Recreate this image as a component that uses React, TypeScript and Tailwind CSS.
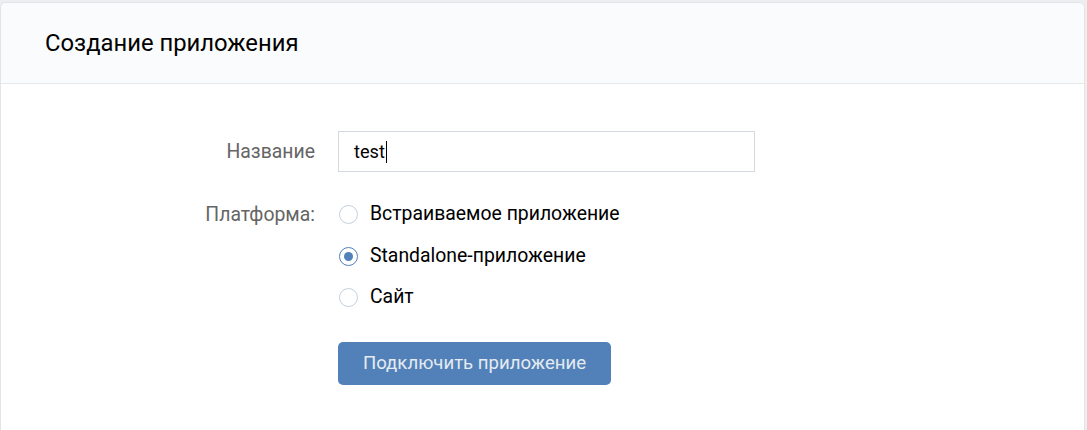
import { useState } from 'react';

const platforms = ['Встраиваемое приложение', 'Standalone-приложение', 'Сайт'];

export default function App() {
  const [platform, setPlatform] = useState(1);

  return (
    <div className="min-h-[430px] bg-[#edeef0] pt-[3px] pl-px pr-[3px] font-['Roboto','Liberation_Sans',sans-serif]">
      <div className="rounded-t-[5px] bg-white shadow-[0_1px_0_0_#d7d8db,0_0_0_1px_#e3e4e8] min-h-[427px]">
        {/* Header */}
        <div className="flex h-[81px] items-center rounded-t-[5px] border-b border-[#e7e8ec] bg-[#fafbfc] px-[44px]">
          <h1 className="pt-[2px] text-[23.8px] text-[#000]">Создание приложения</h1>
        </div>

        {/* Form */}
        <div className="pt-[47px]">
          <div className="flex items-center">
            <div className="w-[314px] text-right text-[19.4px] text-[#656565]">Название</div>
            <div className="ml-[23px] flex h-[41px] w-[417px] items-center border border-[#d3d9de] bg-white px-[15px] text-[18.2px] text-[#000]">
              <span>test</span>
              <span className="ml-px h-[22px] w-px bg-[#000]" />
            </div>
          </div>

          <div className="mt-[21px] flex">
            <div className="w-[314px] pt-[7px] text-right text-[19.4px] text-[#656565]">Платформа:</div>
            <div className="ml-[24px] flex flex-col">
              {platforms.map((p, i) => (
                <label
                  key={p}
                  onClick={() => setPlatform(i)}
                  className={`flex cursor-pointer items-center gap-[12px] text-[19.4px] text-[#000] ${i === 2 ? 'h-[40px]' : 'h-[42px]'}`}
                >
                  <span
                    className={`flex h-[19px] w-[19px] items-center justify-center rounded-full border ${
                      platform === i ? 'border-[#5181b8]' : 'border-[#c5d0db]'
                    }`}
                  >
                    {platform === i && <span className="h-[9px] w-[9px] rounded-full bg-[#5181b8]" />}
                  </span>
                  {p}
                </label>
              ))}
            </div>
          </div>

          <div className="ml-[337px] mt-[25px]">
            <button className="h-[43px] w-[273px] rounded-[5px] bg-[#5181b8] text-[18.6px] text-[#e5ebf1]">
              Подключить приложение
            </button>
          </div>
        </div>
      </div>
    </div>
  );
}
